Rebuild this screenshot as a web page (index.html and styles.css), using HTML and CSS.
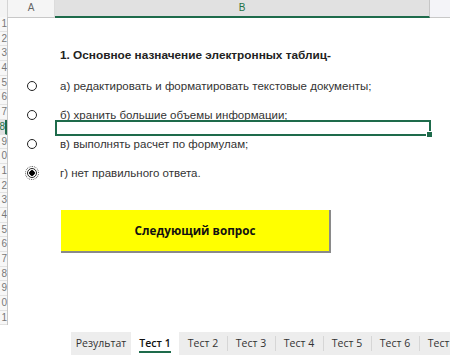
FILE: index.html
```html
<!DOCTYPE html>
<html lang="ru">
<head>
  <meta charset="UTF-8">
  <title>Тест 1</title>
<link rel="stylesheet" href="styles.css">
</head>
<body>
<div class="colheads">
  <div class="corner"></div>
  <div class="colhead">A</div>
  <div class="colhead sel">B</div>
  <div class="colhead last"></div>
</div>
<div class="sheet">
  <div class="rownums">
    <div>1</div><div>2</div><div>3</div><div>4</div><div>5</div><div>6</div><div>7</div>
    <div class="sel">8</div><div>9</div><div>0</div><div>1</div><div>2</div><div>3</div><div>4</div>
    <div>5</div><div>6</div><div>7</div><div>8</div><div>9</div><div>0</div><div>1</div>
  </div>
  <div class="cells">
    <div class="question">1. Основное назначение электронных таблиц-</div>
    <div class="option"><span class="radio"></span><span>а) редактировать и форматировать текстовые документы;</span></div>
    <div class="option"><span class="radio"></span><span>б) хранить большие объемы информации;</span></div>
    <div class="option"><span class="radio"></span><span>в) выполнять расчет по формулам;</span></div>
    <div class="option"><span class="radio checked"></span><span>г) нет правильного ответа.</span></div>
    <div class="next">Следующий вопрос</div>
    <div class="selection"></div>
  </div>
</div>
<div class="tabs">
  <div class="tab">Результат</div>
  <div class="tab active"><span>Тест 1</span></div>
  <div class="tab">Тест 2</div>
  <div class="tab">Тест 3</div>
  <div class="tab">Тест 4</div>
  <div class="tab">Тест 5</div>
  <div class="tab">Тест 6</div>
  <div class="tab">Тест 7</div>
</div>
</body>
</html>
```

FILE: styles.css
```css
* {
  box-sizing: border-box;
}
body {
  margin: 0;
  width: 450px;
  height: 355px;
  overflow: hidden;
  background: #fff;
  font-family: "Liberation Sans", Arial, sans-serif;
}
.colheads {
  display: grid;
  grid-template-columns: 8px 47px 375px 20px;
  height: 17px;
}
.corner {
  background: #f3f3f3;
  border-right: 1px solid #d4d4d4;
  border-bottom: 1px solid #c8c8c8;
}
.colhead {
  background: #f5f5f5;
  border-right: 1px solid #dcdcdc;
  border-bottom: 1px solid #c8c8c8;
  color: #666;
  font-size: 10px;
  line-height: 16px;
  text-align: center;
}
.colhead.sel {
  background: #e1e1e1;
  color: #217346;
  border-bottom: 2px solid #1e6b4b;
  border-right-color: #c6c6c6;
}
.colhead.last {
  background: #f4f4f8;
  border-right: none;
}
.sheet {
  display: grid;
  grid-template-columns: 8px 1fr;
  height: 315px;
}
.rownums {
  background: #f7f7f7;
  border-right: 1px solid #c8c8c8;
  align-self: start;
}
.rownums div {
  height: 14.7px;
  border-bottom: 1px solid #e2e2e2;
  color: #777;
  font-size: 10px;
  line-height: 14px;
  text-align: right;
  overflow: hidden;
  direction: rtl;
}
.rownums .sel {
  background: #e1e1e1;
  color: #217346;
  border-right: 2px solid #1e6b4b;
}
.cells {
  position: relative;
  padding-top: 28px;
}
.question {
  padding-left: 52px;
  font-size: 11.8px;
  font-weight: bold;
  line-height: 20px;
  color: #222;
  margin-bottom: 6px;
}
.option {
  display: grid;
  grid-template-columns: 47px 1fr;
  align-items: center;
  height: 29px;
  font-size: 11.5px;
  color: #333;
}
.option span:last-child {
  padding-left: 5px;
}
.radio {
  justify-self: center;
  width: 10px;
  height: 10px;
  border: 1px solid #222;
  border-radius: 50%;
  margin-left: 1px;
  background: #fff;
}
.radio.checked {
  background: radial-gradient(circle, #000 0 2.5px, #fff 3px);
  outline: 1px dotted #555;
  outline-offset: 1px;
}
.next {
  width: 270px;
  height: 43px;
  margin: 23px 0 0 53px;
  background: #ffff00;
  border-right: 2px solid #8a8a8a;
  border-bottom: 2px solid #8a8a8a;
  font-family: "Open Sans", sans-serif;
  font-weight: bold;
  font-size: 11.7px;
  line-height: 41px;
  text-align: center;
  color: #111;
}
.selection {
  position: absolute;
  left: 47px;
  top: 103px;
  width: 376px;
  height: 16px;
  border: 2px solid #1e6b4b;
}
.selection::after {
  content: '';
  position: absolute;
  right: -4px;
  bottom: -4px;
  width: 5px;
  height: 5px;
  background: #1e6b4b;
  border: 1px solid #fff;
}
.tabs {
  display: flex;
  margin-left: 71px;
  height: 23px;
  background: #ededed;
  font-family: "Open Sans", sans-serif;
  font-size: 10.5px;
  color: #333;
}
.tab {
  flex: none;
  width: 48px;
  line-height: 22px;
  text-align: center;
  white-space: nowrap;
  position: relative;
}
.tab + .tab::before {
  content: '';
  position: absolute;
  left: 0;
  top: 4px;
  height: 15px;
  border-left: 1px solid #d6d6d6;
}
.tab:first-child {
  width: 60px;
}
.tab.active {
  background: #fff;
  color: #111;
  font-weight: 600;
}
.tab.active::before,
.tab.active + .tab::before {
  display: none;
}
.tab.active span {
  border-bottom: 2px solid #1e6b4b;
  padding-bottom: 1px;
}
```
